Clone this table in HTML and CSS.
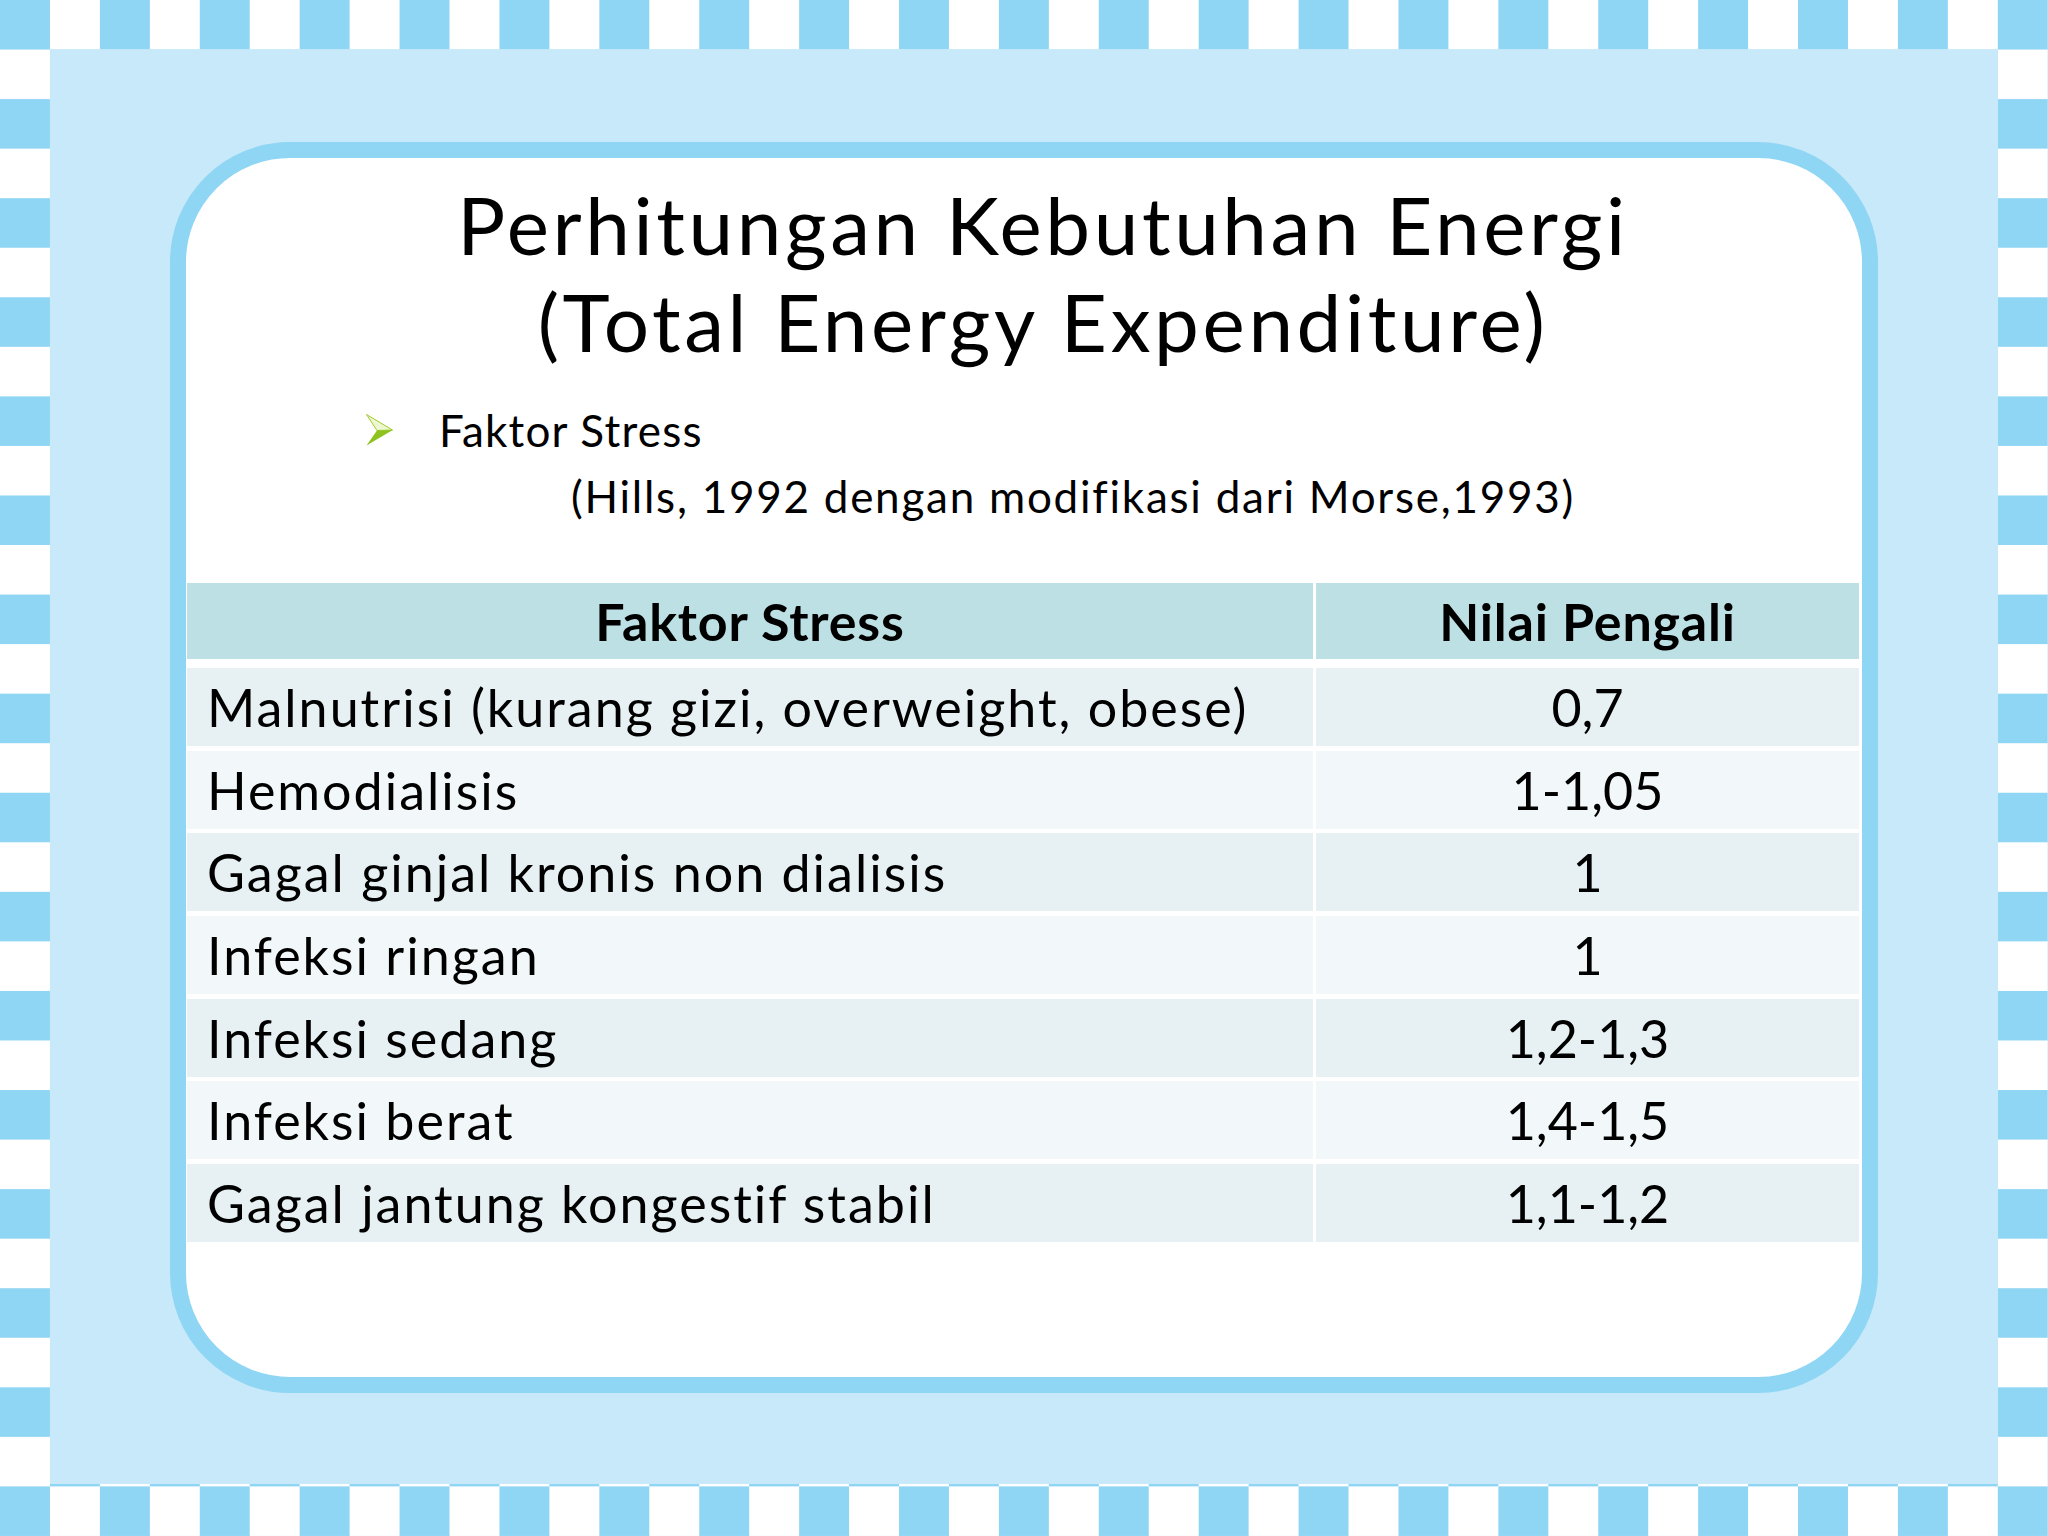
FILE: index.html
```html
<!DOCTYPE html>
<html lang="id">
<head>
<meta charset="utf-8">
<title>Perhitungan Kebutuhan Energi</title>
<link rel="stylesheet" href="styles.css">
</head>
<body>
<div class="slide">
  <div class="frame">
    <div class="panel">
      <h1 class="title">Perhitungan Kebutuhan Energi<br>(Total Energy Expenditure)</h1>
      <div class="bullet">
        <svg class="arrow" width="27" height="32" viewBox="0 0 27 32">
          <polygon points="0.5,0.5 26.5,16 11,16.5" fill="#eef7d2" stroke="#9ccc2a" stroke-width="1"/>
          <polygon points="11,16.5 26.8,16 0.5,31.5" fill="#8dc21f"/>
        </svg>
        <span class="bullet-text">Faktor Stress</span>
      </div>
      <div class="source">(Hills, 1992 dengan modifikasi dari Morse,1993)</div>
      <div class="table">
        <div class="thead">
          <div class="th">Faktor Stress</div>
          <div class="th">Nilai Pengali</div>
        </div>
        <div class="tbody">
          <div class="td odd">Malnutrisi (kurang gizi, overweight, obese)</div>
          <div class="td num odd">0,7</div>
          <div class="td even">Hemodialisis</div>
          <div class="td num even">1-1,05</div>
          <div class="td odd">Gagal ginjal kronis non dialisis</div>
          <div class="td num odd">1</div>
          <div class="td even">Infeksi ringan</div>
          <div class="td num even">1</div>
          <div class="td odd">Infeksi sedang</div>
          <div class="td num odd">1,2-1,3</div>
          <div class="td even">Infeksi berat</div>
          <div class="td num even">1,4-1,5</div>
          <div class="td odd">Gagal jantung kongestif stabil</div>
          <div class="td num odd">1,1-1,2</div>
        </div>
      </div>
    </div>
  </div>
</div>
</body>
</html>
```
FILE: styles.css
```css
html, body {
  margin: 0;
  padding: 0;
}
body {
  width: 2048px;
  height: 1536px;
  overflow: hidden;
  font-family: Lato, "Open Sans", "DejaVu Sans", sans-serif;
  color: #000;
}
.slide {
  width: 2048px;
  height: 1536px;
  box-sizing: border-box;
  padding: 50px 50px 52px 50px;
  background: conic-gradient(#ffffff 0 25%, #8fd5f4 0 50%, #ffffff 0 75%, #8fd5f4 0) 0 0 / 99.9px 99.1px;
}
.frame {
  height: 100%;
  box-sizing: border-box;
  background: #c7e9fa;
  padding: 92px 120px 91px 120px;
  display: flex;
}
.panel {
  flex: 1;
  background: #ffffff;
  border: 16px solid #8fd5f4;
  border-radius: 120px;
  padding-top: 17.5px;
  display: flex;
  flex-direction: column;
}
.title {
  margin: 0;
  padding-left: 38px;
  font-weight: 400;
  font-size: 80px;
  line-height: 97px;
  letter-spacing: 3.6px;
  text-align: center;
}
.bullet {
  display: flex;
  align-items: center;
  margin: 27.5px 0 0 180px;
  font-size: 44px;
  line-height: 66px;
}
.arrow {
  flex: none;
}
.bullet-text {
  margin-left: 46px;
  letter-spacing: 1.2px;
}
.source {
  margin-left: 385px;
  font-size: 44px;
  line-height: 66px;
  letter-spacing: 1.75px;
}
.table {
  margin: 54px 3px 0 1px;
}
.thead,
.tbody {
  display: grid;
  grid-template-columns: 1126px 543px;
  column-gap: 3px;
}
.thead {
  height: 76px;
}
.th {
  background: #bde0e4;
  font-weight: 700;
  font-size: 52px;
  letter-spacing: 0.8px;
  display: flex;
  align-items: center;
  justify-content: center;
}
.tbody {
  margin-top: 9px;
  row-gap: 4.7px;
  grid-auto-rows: 78px;
}
.td {
  font-size: 52px;
  letter-spacing: 2px;
  display: flex;
  align-items: center;
  padding-left: 20px;
}
.td.num {
  justify-content: center;
  padding-left: 0;
  letter-spacing: 0;
}
.odd {
  background: #e7f1f3;
}
.even {
  background: #f2f8f9;
}
```
